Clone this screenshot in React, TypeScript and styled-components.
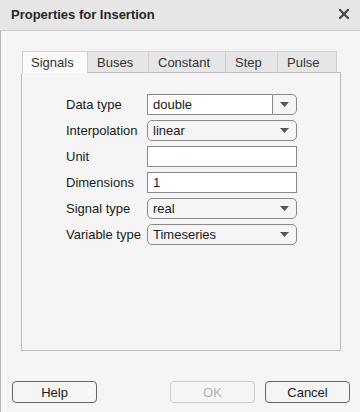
import React from 'react';
import styled, { createGlobalStyle } from 'styled-components';

const GlobalStyle = createGlobalStyle`
  html, body {
    margin: 0;
    padding: 0;
    background: #f5f5f5;
  }
  * {
    box-sizing: border-box;
  }
`;

const Window = styled.div`
  width: 360px;
  height: 412px;
  display: flex;
  flex-direction: column;
  font-family: "Liberation Sans", Arial, sans-serif;
  font-size: 13px;
  color: #1a1a1a;
  background: #f5f5f5;
`;

const TitleBar = styled.div`
  height: 31px;
  flex: none;
  display: flex;
  align-items: center;
  justify-content: space-between;
  padding: 0 11px 2px 11px;
  background: #e6e6e6;
  border-bottom: 1px solid #cccccc;
`;

const Title = styled.span`
  font-weight: bold;
  font-size: 13px;
  color: #262626;
`;

const CloseButton = styled.button`
  border: none;
  background: none;
  padding: 0;
  display: flex;
  cursor: pointer;
`;

const Body = styled.div`
  flex: 1;
  display: flex;
  flex-direction: column;
  border-left: 1px solid #b5b5b5;
  padding: 20px 10px 9px 20px;
`;

const TabGroup = styled.div`
  width: 320px;
  display: flex;
  flex-direction: column;
`;

const TabRow = styled.div`
  display: flex;
  height: 22px;
  padding-left: 1px;
`;

const Tab = styled.div<{ $w: number; $active?: boolean }>`
  width: ${p => p.$w}px;
  height: 22px;
  display: flex;
  align-items: center;
  padding-left: ${p => (p.$active ? 8 : 9)}px;
  background: ${p => (p.$active ? '#fafafa' : '#e6e6e6')};
  border: 1px solid #cfcfcf;
  border-left: ${p => (p.$active ? '1px solid #cfcfcf' : 'none')};
  border-bottom: ${p => (p.$active ? 'none' : '1px solid #bdbdbd')};
  color: #333;
`;

const TabFiller = styled.div`
  width: 4px;
  height: 22px;
  border-bottom: 1px solid #bdbdbd;
`;

const Panel = styled.div`
  height: 278px;
  border: 1px solid #bdbdbd;
  border-top: none;
  padding: 21px 0 0 44px;
`;

const Form = styled.div`
  display: grid;
  grid-template-columns: 81px 150px;
  grid-auto-rows: 21px;
  row-gap: 5px;
  align-items: center;
`;

const Label = styled.span`
  color: #1a1a1a;
`;

const TextBox = styled.div`
  height: 21px;
  display: flex;
  align-items: center;
  padding-left: 5px;
  background: #ffffff;
  border: 1px solid #8a8a8a;
`;

const Combo = styled.div`
  height: 21px;
  display: flex;
`;

const ComboText = styled.div`
  flex: 1;
  display: flex;
  align-items: center;
  padding-left: 5px;
  background: #ffffff;
  border: 1px solid #8a8a8a;
  border-right: none;
`;

const ComboButton = styled.div`
  width: 25px;
  display: flex;
  align-items: center;
  justify-content: center;
  background: #f5f5f5;
  border: 1px solid #8a8a8a;
  border-radius: 0 5px 5px 0;
`;

const Select = styled.div`
  height: 21px;
  display: flex;
  align-items: center;
  justify-content: space-between;
  padding: 0 7px 0 5px;
  background: #f5f5f5;
  border: 1px solid #8a8a8a;
  border-radius: 5px;
`;

const Footer = styled.div`
  margin-top: auto;
  display: flex;
  align-items: center;
  margin-left: -9px;
`;

const Button = styled.button<{ $disabled?: boolean }>`
  width: 85px;
  height: 22px;
  font-family: "Liberation Sans", Arial, sans-serif;
  font-size: 13px;
  padding: 0;
  background: #f5f5f5;
  color: ${p => (p.$disabled ? '#b3b3b3' : '#1a1a1a')};
  border: 1px solid ${p => (p.$disabled ? '#cccccc' : '#666666')};
  border-radius: 4px;
`;

const Spacer = styled.div`
  flex: 1;
`;

const Gap = styled.div`
  width: 10px;
`;

const Arrow = () => (
  <svg width="9" height="5" viewBox="0 0 9 5">
    <path d="M0 0 H9 L4.5 5 Z" fill="#555" />
  </svg>
);

const tabs = [
  { name: 'Signals', w: 66 },
  { name: 'Buses', w: 61 },
  { name: 'Constant', w: 77 },
  { name: 'Step', w: 52 },
  { name: 'Pulse', w: 59 },
];

export default function App() {
  return (
    <Window>
      <GlobalStyle />
      <TitleBar>
        <Title>Properties for Insertion</Title>
        <CloseButton aria-label="Close">
          <svg width="10" height="10" viewBox="0 0 10 10">
            <path d="M1 1 L9 9 M9 1 L1 9" stroke="#444" strokeWidth="2.2" strokeLinecap="square" />
          </svg>
        </CloseButton>
      </TitleBar>
      <Body>
        <TabGroup>
          <TabRow>
            {tabs.map((t, i) => (
              <Tab key={t.name} $w={t.w} $active={i === 0}>
                {t.name}
              </Tab>
            ))}
            <TabFiller />
          </TabRow>
          <Panel>
            <Form>
              <Label>Data type</Label>
              <Combo>
                <ComboText>double</ComboText>
                <ComboButton>
                  <Arrow />
                </ComboButton>
              </Combo>

              <Label>Interpolation</Label>
              <Select>
                linear
                <Arrow />
              </Select>

              <Label>Unit</Label>
              <TextBox />

              <Label>Dimensions</Label>
              <TextBox>1</TextBox>

              <Label>Signal type</Label>
              <Select>
                real
                <Arrow />
              </Select>

              <Label>Variable type</Label>
              <Select>
                Timeseries
                <Arrow />
              </Select>
            </Form>
          </Panel>
        </TabGroup>
        <Footer>
          <Button>Help</Button>
          <Spacer />
          <Button $disabled>OK</Button>
          <Gap />
          <Button>Cancel</Button>
        </Footer>
      </Body>
    </Window>
  );
}
